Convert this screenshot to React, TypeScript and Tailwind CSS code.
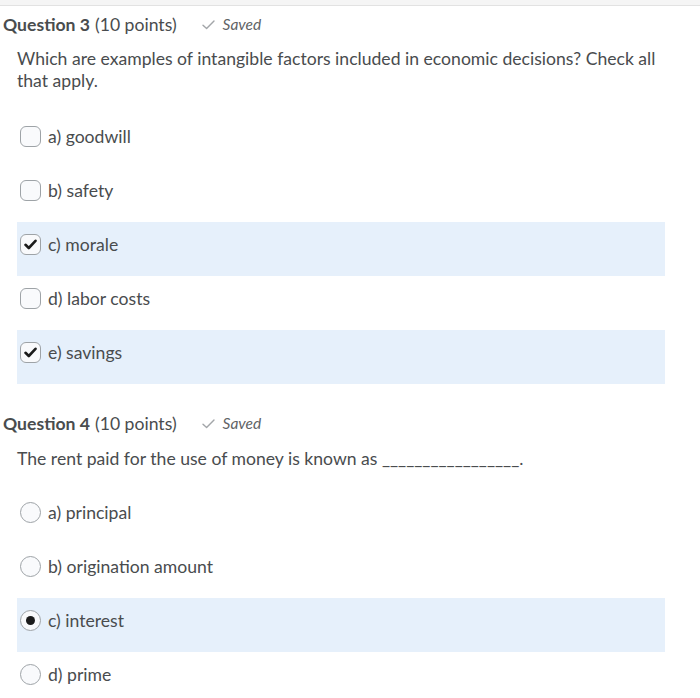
const font = { fontFamily: "Lato, 'Open Sans', sans-serif" };

type Opt = { label: string; checked?: boolean };

const Checkbox = ({ checked }: { checked?: boolean }) => (
  <span className="flex h-[21px] w-[21px] shrink-0 items-center justify-center rounded-[6px] border border-[#9ea3a7] bg-[#f9fafc]">
    {checked && (
      <svg width="13" height="11" viewBox="0 0 13 11">
        <path d="M1.5 5.8 L4.8 9 L11.5 1.8" fill="none" stroke="#1c1c1c" strokeWidth="2.6" strokeLinecap="round" strokeLinejoin="round" />
      </svg>
    )}
  </span>
);

const Radio = ({ checked }: { checked?: boolean }) => (
  <span className="flex h-[21px] w-[21px] shrink-0 items-center justify-center rounded-full border border-[#9ea3a7] bg-[#f9fafc]">
    {checked && <span className="h-[9px] w-[9px] rounded-full bg-[#1c1c1c]" />}
  </span>
);

const SavedTag = () => (
  <span className="ml-[25px] flex items-center gap-[8px] text-[15.5px] italic text-[#5f6366]">
    <svg width="13" height="10" viewBox="0 0 13 10">
      <path d="M1 5.2 L4.6 8.6 L12 1" fill="none" stroke="#a3a6a9" strokeWidth="1.4" strokeLinecap="round" strokeLinejoin="round" />
    </svg>
    Saved
  </span>
);

const Header = ({ num }: { num: number }) => (
  <div className="flex h-[24px] items-center pl-[3px] text-[17.6px] text-[#494c4e]">
    <span className="font-bold">Question {num}</span>
    <span className="ml-[5px]">(10 points)</span>
    <SavedTag />
  </div>
);

const OptionRow = ({ opt, radio }: { opt: Opt; radio?: boolean }) => (
  <div className={`flex h-[54px] items-start gap-[7px] pl-[3px] pt-[12px] ${opt.checked ? "bg-[#e6f0fb]" : ""}`}>
    {radio ? <Radio checked={opt.checked} /> : <Checkbox checked={opt.checked} />}
    <span className="text-[17.6px] leading-[21px] text-[#494c4e]">{opt.label}</span>
  </div>
);

export default function App() {
  const q3: Opt[] = [
    { label: "a) goodwill" },
    { label: "b) safety" },
    { label: "c) morale", checked: true },
    { label: "d) labor costs" },
    { label: "e) savings", checked: true },
  ];
  const q4: Opt[] = [
    { label: "a) principal" },
    { label: "b) origination amount" },
    { label: "c) interest", checked: true },
    { label: "d) prime" },
  ];

  return (
    <div className="h-[698px] w-[700px] overflow-hidden bg-white" style={font}>
      <div className="h-[6px] border-b border-[#e2e2e2] bg-[#f5f5f5]" />

      <div className="pt-[7px]">
        <Header num={3} />
        <div className="ml-[17px] mt-[11px] w-[648px] text-[17.6px] leading-[22px] text-[#494c4e]">
          Which are examples of intangible factors included in economic decisions? Check all that apply.
        </div>
        <div className="ml-[17px] mt-[22px] w-[648px]">
          {q3.map((o) => (
            <OptionRow key={o.label} opt={o} />
          ))}
        </div>
      </div>

      <div className="mt-[28px]">
        <Header num={4} />
        <div className="ml-[17px] mt-[12px] w-[648px] text-[17.6px] leading-[22px] text-[#494c4e]">
          The rent paid for the use of money is known as _________________.
        </div>
        <div className="ml-[17px] mt-[20px] w-[648px]">
          {q4.map((o) => (
            <OptionRow key={o.label} opt={o} radio />
          ))}
        </div>
      </div>
    </div>
  );
}
